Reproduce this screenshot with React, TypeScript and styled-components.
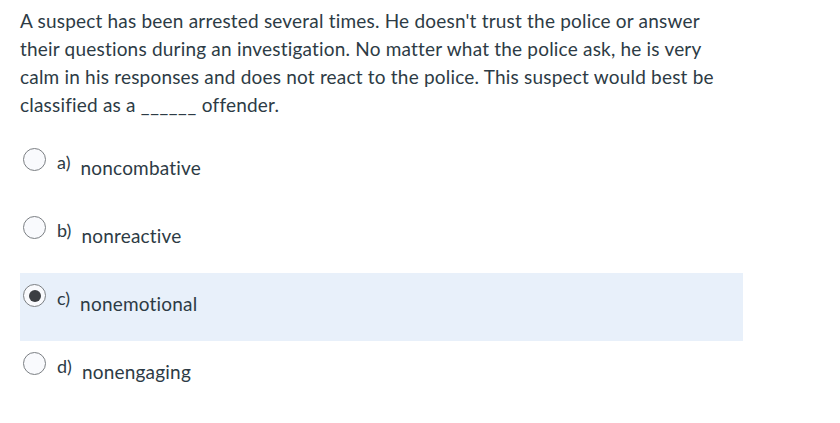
import React, { useState } from 'react'
import styled, { createGlobalStyle } from 'styled-components'

const GlobalStyle = createGlobalStyle`
  body {
    margin: 0;
    background: #ffffff;
    font-family: Lato, "Open Sans", sans-serif;
    color: #2d3b45;
    font-variant-ligatures: none;
  }
`

const Page = styled.div`
  padding: 7px 20px 0 20px;
  width: 723px;
`

const Question = styled.p`
  margin: 0 0 18px 0;
  font-size: 19px;
  line-height: 28px;
  letter-spacing: 0.2px;
`

const Blank = styled.span`
  letter-spacing: 0.6px;
`

const Options = styled.div`
  display: flex;
  flex-direction: column;
`

const OptionRow = styled.label<{ $selected: boolean }>`
  display: flex;
  align-items: flex-start;
  height: 68px;
  padding: 11px 0 0 3px;
  box-sizing: border-box;
  background: ${(p) => (p.$selected ? '#e8f0fa' : 'transparent')};
  cursor: pointer;
`

const Radio = styled.span<{ $checked: boolean }>`
  flex: none;
  width: 23px;
  height: 23px;
  box-sizing: border-box;
  border-radius: 50%;
  border: 1px solid #7b7f83;
  background: #f9fafd;
  display: flex;
  align-items: center;
  justify-content: center;

  &::after {
    content: '';
    display: ${(p) => (p.$checked ? 'block' : 'none')};
    width: 12px;
    height: 12px;
    border-radius: 50%;
    background: #3b3e42;
  }
`

const Letter = styled.span`
  margin-left: 11px;
  margin-top: 4px;
  font-size: 18px;
  line-height: 20px;
`

const Answer = styled.span`
  margin-left: 10px;
  margin-top: 9px;
  font-size: 19px;
  line-height: 22px;
  letter-spacing: 0.2px;
`

const answers = [
  { key: 'a', text: 'noncombative' },
  { key: 'b', text: 'nonreactive' },
  { key: 'c', text: 'nonemotional' },
  { key: 'd', text: 'nonengaging' },
]

export default function App() {
  const [picked, setPicked] = useState('c')

  return (
    <Page>
      <GlobalStyle />
      <Question>
        A suspect has been arrested several times. He doesn't trust the police or answer
        <br />
        their questions during an investigation. No matter what the police ask, he is very
        <br />
        calm in his responses and does not react to the police. This suspect would best be
        <br />
        classified as a <Blank>______</Blank> offender.
      </Question>
      <Options>
        {answers.map((a) => (
          <OptionRow key={a.key} $selected={picked === a.key} onClick={() => setPicked(a.key)}>
            <Radio $checked={picked === a.key} />
            <Letter>{a.key})</Letter>
            <Answer>{a.text}</Answer>
          </OptionRow>
        ))}
      </Options>
    </Page>
  )
}
